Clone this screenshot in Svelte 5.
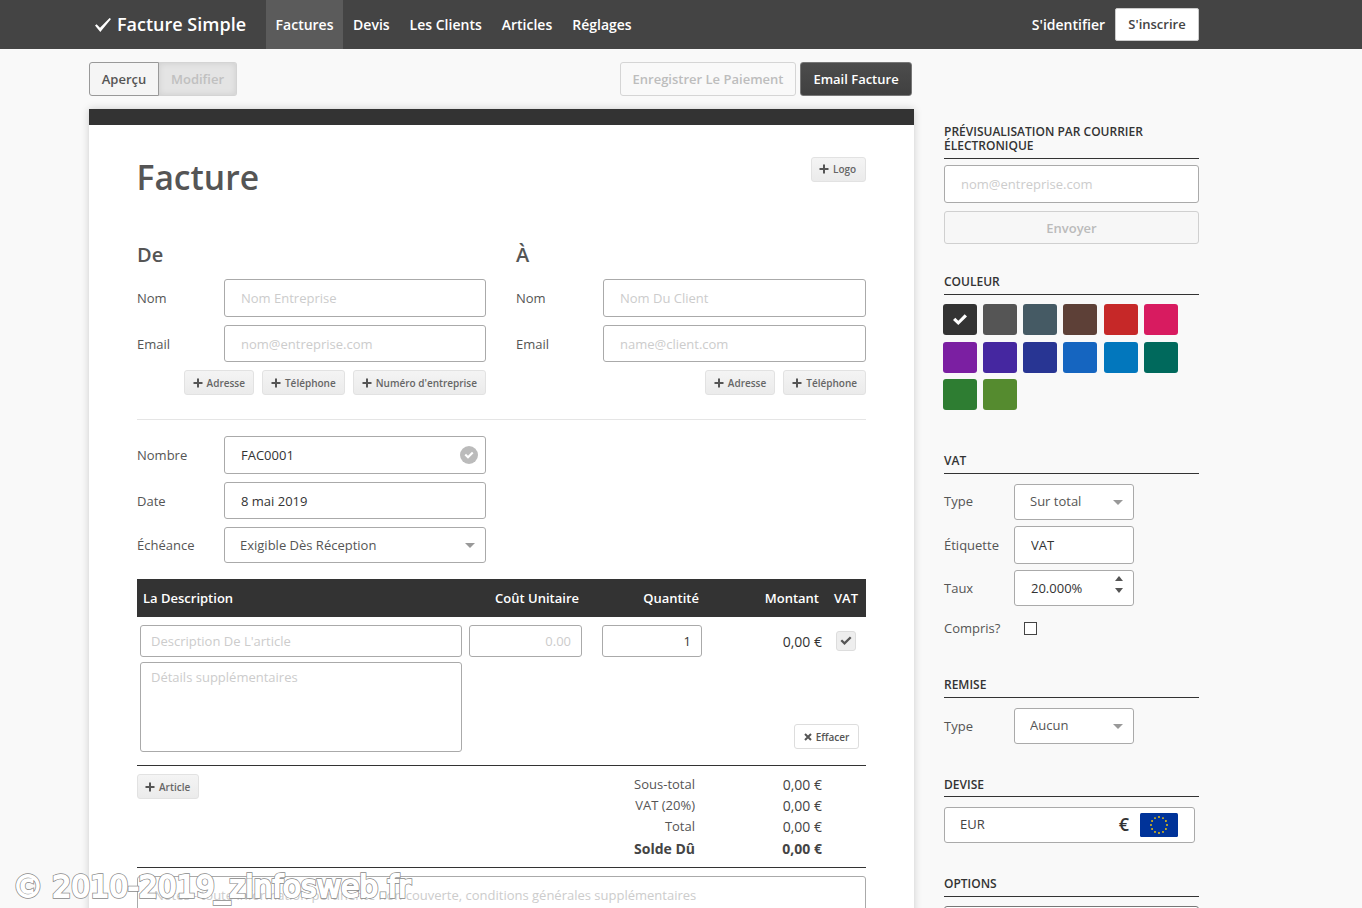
<script>
  const swatches = ['#333333','#555555','#455a64','#5d4037','#c62828','#d81b60','#7b1fa2','#4527a0','#283593','#1565c0','#0277bd','#00695c','#2e7d32','#558b2f'];
  const stars = Array.from({length:12},(_,i)=>{const a=i*Math.PI/6;return {x:19+Math.cos(a)*8,y:12+Math.sin(a)*8};});
  const totals = [['Sous-total','0,00 €'],['VAT (20%)','0,00 €'],['Total','0,00 €']];
  const markText = '© 2010-2019_zinfosweb.fr';
</script>

{#snippet plus()}
  <svg class="plus" viewBox="0 0 10 10" width="10" height="10"><path d="M4 0.5h2v3.500h3.500v2H6v3.500H4V6H0.500V4H4z" fill="#555"/></svg>
{/snippet}
{#snippet caret()}
  <span class="caret"></span>
{/snippet}

<div class="page">
  <header class="nav">
    <div class="wrap navrow">
      <a class="brand">
        <svg width="18" height="16" viewBox="0 0 18 16"><path d="M1 8.500l1.600-1.300 3.400 3.600L15.600 1l1.400 1L6.300 15z" fill="#fff"/></svg>
        <span class="brandtext">Facture Simple</span>
      </a>
      <nav class="links">
        <a class="active">Factures</a><a>Devis</a><a>Les Clients</a><a>Articles</a><a>Réglages</a>
      </nav>
      <a class="login">S'identifier</a>
      <button class="signup">S'inscrire</button>
    </div>
  </header>

  <div class="wrap toolbar">
    <div class="seg">
      <button class="seg-a">Aperçu</button><button class="seg-b">Modifier</button>
    </div>
    <div class="actions">
      <button class="pay">Enregistrer Le Paiement</button>
      <button class="email">Email Facture</button>
    </div>
  </div>

  <div class="wrap main">
    <section class="card">
      <div class="band"></div>
      <div class="body">
        <div class="titlerow">
          <h1>Facture</h1>
          <button class="mini logo"><span class="up1">{@render plus()}</span><span class="up1">Logo</span></button>
        </div>

        <div class="parties">
          <div class="party">
            <h2>De</h2>
            <div class="row r1"><label>Nom</label><input placeholder="Nom Entreprise" /></div>
            <div class="row r2"><label>Email</label><input placeholder="nom@entreprise.com" /></div>
            <div class="minis">
              <button class="mini">{@render plus()}Adresse</button>
              <button class="mini">{@render plus()}Téléphone</button>
              <button class="mini">{@render plus()}Numéro d'entreprise</button>
            </div>
          </div>
          <div class="party party-to">
            <h2>À</h2>
            <div class="row r1"><label>Nom</label><input placeholder="Nom Du Client" /></div>
            <div class="row r2"><label>Email</label><input placeholder="name@client.com" /></div>
            <div class="minis">
              <button class="mini">{@render plus()}Adresse</button>
              <button class="mini">{@render plus()}Téléphone</button>
            </div>
          </div>
        </div>

        <hr class="sep" />

        <div class="meta">
          <div class="row m1"><label>Nombre</label>
            <div class="field"><input value="FAC0001" />
              <svg class="ok" width="18" height="18" viewBox="0 0 18 18"><circle cx="9" cy="9" r="9" fill="#bbb"/><path d="M4.500 9.300l1.500-1.500 2 2 4-4 1.500 1.500-5.500 5.500z" fill="#fff"/></svg>
            </div>
          </div>
          <div class="row m2"><label>Date</label><input value="8 mai 2019" /></div>
          <div class="row m3"><label>Échéance</label>
            <div class="field"><select><option>Exigible Dès Réception</option></select>{@render caret()}</div>
          </div>
        </div>

        <div class="thead">
          <span class="th-d">La Description</span>
          <span class="th-c">Coût Unitaire</span>
          <span class="th-q">Quantité</span>
          <span class="th-m">Montant</span>
          <span class="th-v">VAT</span>
        </div>

        <div class="item">
          <div class="item-desc">
            <input class="sm" placeholder="Description De L'article" />
            <textarea placeholder="Détails supplémentaires"></textarea>
          </div>
          <input class="sm cost" placeholder="0.00" />
          <input class="sm qty" value="1" />
          <div class="amount">0,00 €</div>
          <div class="tax"><svg width="12" height="10" viewBox="0 0 12 10"><path d="M0.500 5l1.600-1.600 2.400 2.400L9.900 0.500 11.500 2l-7 7z" fill="#555"/></svg></div>
          <button class="del"><svg width="8" height="8" viewBox="0 0 8 8"><path d="M1 1l6 6M7 1L1 7" stroke="#555" stroke-width="2"/></svg>Effacer</button>
        </div>

        <div class="summary">
          <button class="mini article">{@render plus()}Article</button>
          <div class="totals">
            {#each totals as t}
              <div class="trow"><span>{t[0]}</span><span>{t[1]}</span></div>
            {/each}
            <div class="trow due"><span>Solde Dû</span><span>0,00 €</span></div>
          </div>
        </div>

        <textarea class="notes" placeholder="Notes - toute information pertinente non couverte, conditions générales supplémentaires"></textarea>
      </div>
    </section>

    <aside class="side">
      <h4 class="h-prev">Prévisualisation par courrier électronique</h4>
      <input class="side-input" placeholder="nom@entreprise.com" />
      <button class="send">Envoyer</button>

      <h4 class="h-color">Couleur</h4>
      <div class="swatches">
        {#each swatches as c, i}
          <div class="swatch" style="background:{c}">
            {#if i === 0}
              <svg width="16" height="13" viewBox="0 0 16 13"><path d="M1 7l2.300-2.300 3 3L12.700 1.300 15 3.600 6.300 12z" fill="#fff"/></svg>
            {/if}
          </div>
        {/each}
      </div>

      <h4 class="h-vat">VAT</h4>
      <div class="srow s1"><label>Type</label><div class="field w120"><select><option>Sur total</option></select>{@render caret()}</div></div>
      <div class="srow s2"><label>Étiquette</label><input class="w120" value="VAT" /></div>
      <div class="srow s3"><label>Taux</label>
        <div class="field w120"><input value="20.000%" />
          <span class="spin"><i class="up"></i><i class="down"></i></span>
        </div>
      </div>
      <div class="srow s4"><label>Compris?</label><span class="check"></span></div>

      <h4 class="h-rem">Remise</h4>
      <div class="srow s5"><label>Type</label><div class="field w120"><select><option>Aucun</option></select>{@render caret()}</div></div>

      <h4 class="h-dev">Devise</h4>
      <div class="currency">
        <span class="code">EUR</span>
        <span class="euro">€</span>
        <svg class="flag" width="38" height="24" viewBox="0 0 38 24">
          <rect width="38" height="24" rx="1.500" fill="#003399"/>
          {#each stars as s}<circle cx={s.x} cy={s.y} r="0.900" fill="#ffcc00"/>{/each}
        </svg>
      </div>

      <h4 class="h-opt">Options</h4>
      <div class="opt"></div>
    </aside>
  </div>

  <div class="mark" data-text={markText}>{markText}</div>
</div>

<style>
  :global(body) { margin: 0; background: #f9f9f9; overflow: hidden; }
  * { box-sizing: border-box; }
  .page {
    height: 908px; overflow: hidden; position: relative;
    font-family: "Open Sans", "Liberation Sans", sans-serif;
    font-size: 13px; color: #555;
  }
  .wrap { margin-left: 89px; width: 1110px; }
  .nav { height: 49px; background: #444; }
  .navrow { display: flex; align-items: center; height: 49px; color: #fff; }
  .brand { display: flex; align-items: center; gap: 5px; font-size: 18px; font-weight: 600; margin-left: 5px; width: 172px; flex: none; }
  .brandtext { margin-top: -2px; }
  .links { display: flex; height: 49px; flex: 1; font-size: 14px; font-weight: 600; }
  .links a { padding: 0 10px; line-height: 49px; }
  .links a.active { background: #5b5b5b; padding: 0 9.6px; }
  .login { font-size: 14px; font-weight: 600; margin-right: 10px; }
  .signup { height: 33px; width: 84px; margin-top: -1px; background: #fff; border: 1px solid #ccc; border-radius: 2px; font: 600 13px "Open Sans", sans-serif; color: #444; padding: 0; }

  .toolbar { display: flex; justify-content: space-between; padding-top: 13px; height: 60px; }
  .seg { display: flex; }
  .seg button { height: 34px; font: 600 13px "Open Sans", sans-serif; padding: 0; }
  .seg-a { width: 70px; background: #f5f5f5; color: #555; border: 1px solid #999; border-radius: 3px 0 0 3px; }
  .seg-b { width: 78px; background: #e4e4e4; color: #c0c0c0; border: 1px solid #d4d4d4; border-left: 0; border-radius: 0 3px 3px 0; box-shadow: inset 0 0 6px rgba(0,0,0,.1); }
  .actions { display: flex; gap: 4px; margin-right: 287px; margin-left: auto; }
  .actions button { height: 34px; font: 600 13px "Open Sans", sans-serif; padding: 0; border-radius: 3px; }
  .pay { width: 176px; background: #f9f9f9; color: #bdbdbd; border: 1px solid #d5d5d5; }
  .email { width: 112px; background: linear-gradient(#4c4c4c, #404040); color: #fff; border: 1px solid #777; }

  .main { display: flex; align-items: flex-start; gap: 30px; }
  .card { width: 825px; flex: none; background: #fff; box-shadow: 0 0 8px rgba(0,0,0,.18); }
  .band { height: 16px; background: #333; }
  .body { padding: 32px 48px 0; }
  .titlerow { display: flex; justify-content: space-between; align-items: flex-start; height: 84px; }
  h1 { margin: -1px 0 0 -0.5px; font-size: 33.6px; font-weight: 600; line-height: 42px; color: #555; }

  .mini { height: 25px; display: inline-flex; align-items: center; gap: 4px; padding: 0 8px; background: linear-gradient(#f4f4f4, #ebebeb); border: 1px solid #e2e2e2; border-radius: 3px; font: 600 10px "Open Sans", sans-serif; color: #666; }
  .plus { flex: none; display: block; }
  .logo { width: 55px; padding: 0 0 0 7px; gap: 4px; }
  .up1 { margin-top: -1px; display: block; }

  .parties { display: flex; gap: 30px; }
  .party { width: 349px; }
  .party-to { width: 350px; }
  h2 { margin: 0; font-size: 20px; font-weight: 600; line-height: 27px; height: 38px; color: #555; }

  .row { display: flex; align-items: center; }
  .row label { width: 87px; flex: none; font-size: 13px; color: #555; }
  .row input, .row .field { flex: 1; min-width: 0; }
  input, textarea, select {
    font: 13px "Open Sans", sans-serif; color: #333; background: #fff;
    border: 1px solid #aaa; border-radius: 3px; outline: none; width: 100%;
  }
  input { padding: 0 16px; }
  select { appearance: none; -webkit-appearance: none; padding: 0 15px; height: 100%; color: #555; }
  input::placeholder, textarea::placeholder { color: #ccc; opacity: 1; }
  .r1 { height: 38px; margin-bottom: 8px; }
  .r2 { height: 37px; margin-bottom: 8px; }
  .row input { height: 100%; }
  .minis { display: flex; justify-content: flex-end; gap: 8px; height: 25px; }

  .sep { border: 0; border-top: 1px solid #e5e5e5; margin: 24px 0 16px; }

  .field { position: relative; height: 100%; }
  .field input { height: 100%; }
  .ok { position: absolute; right: 8px; top: 10px; }
  .caret { position: absolute; right: 11px; top: 50%; margin-top: -2px; width: 0; height: 0; border: 5px solid transparent; border-top: 5px solid #999; border-bottom: 0; pointer-events: none; }

  .meta { width: 349px; }
  .m1 { height: 38px; margin-bottom: 8px; }
  .m2 { height: 37px; margin-bottom: 8px; }
  .m3 { height: 36px; margin-bottom: 16px; }

  .thead { height: 38px; background: #333; color: #fff; font-weight: 600; font-size: 13px; position: relative; display: grid; grid-template-columns: 342px 100px 120px 120px 47px; align-items: center; }
  .th-d { padding-left: 6px; }
  .th-c, .th-q, .th-m, .th-v { text-align: right; }
  .th-v { padding-right: 8px; }

  .item { position: relative; height: 149px; border-bottom: 1px solid #333; padding: 8px 3px 0; display: flex; align-items: flex-start; }
  .item-desc { width: 322px; display: flex; flex-direction: column; gap: 5px; flex: none; }
  .sm { height: 32px; padding: 0 10px; }
  .item textarea { height: 90px; padding: 5px 10px; resize: none; display: block; }
  .cost { width: 113px; flex: none; margin-left: 7px; text-align: right; }
  .qty { width: 100px; flex: none; margin-left: 20px; text-align: right; padding: 0 10px; }
  .amount { width: 120px; flex: none; text-align: right; color: #333; line-height: 34px; font-size: 14px; }
  .tax { width: 20px; height: 20px; margin: 6px 0 0 14px; flex: none; background: #eee; border: 1px solid #ddd; border-radius: 3px; display: flex; align-items: center; justify-content: center; }
  .del { position: absolute; right: 7px; top: 107px; width: 65px; height: 25px; display: flex; align-items: center; justify-content: center; gap: 4px; padding: 0; background: #fff; border: 1px solid #ddd; border-radius: 3px; font: 600 10px "Open Sans", sans-serif; color: #555; }

  .summary { height: 102px; border-bottom: 1px solid #333; padding-top: 8px; display: flex; justify-content: space-between; align-items: flex-start; }
  .article { width: 62px; padding: 0 0 0 7px; }
  .totals { width: 188px; margin-right: 44px; }
  .trow { display: flex; justify-content: space-between; height: 21px; line-height: 21px; margin-left: -14px; }
  .trow span:first-child { width: 75px; white-space: nowrap; display: flex; justify-content: flex-end; }
  .trow span:last-child { color: #444; font-size: 14px; }
  .due { font-weight: 700; font-size: 14px; height: 23px; line-height: 23px; }
  .due span:first-child { color: #444; }
  .notes { display: block; margin-top: 8px; height: 80px; padding: 9px 16px; resize: none; }

  .side { width: 255px; flex: none; }
  h4 { margin: 0; font-size: 12px; font-weight: 600; line-height: 14px; color: #333; text-transform: uppercase; border-bottom: 1px solid #333; }
  .h-prev { margin-top: 16px; padding-bottom: 6px; height: 34px; }
  .side-input { display: block; height: 38px; margin-top: 6px; }
  .send { display: block; width: 100%; height: 33px; margin-top: 8px; padding: 0; background: #f7f7f7; border: 1px solid #d0d0d0; border-radius: 3px; font: 600 13px "Open Sans", sans-serif; color: #bbb; }
  .h-color { margin-top: 31px; height: 20px; padding-bottom: 5px; }
  .swatches { display: grid; grid-template-columns: repeat(6, 34px); column-gap: 6.13px; row-gap: 6.5px; margin: 9px 0 0 -1px; grid-auto-rows: 31px; }
  .swatch { border-radius: 3px; display: flex; align-items: center; justify-content: center; }
  .h-vat { margin-top: 44px; height: 20px; padding-bottom: 5px; }
  .srow { display: flex; align-items: center; font-size: 13px; }
  .srow label { width: 70px; flex: none; }
  .srow select { padding-bottom: 2px; }
  .s1 label, .s4 label { margin-top: -2px; }
  .w120 { width: 120px; flex: none; height: 100%; }
  .s1 { height: 36px; margin-top: 10px; }
  .s2 { height: 38px; margin-top: 6px; }
  .s2 input { height: 100%; padding: 0 16px; }
  .s3 { height: 36px; margin-top: 6px; }
  .s4 { height: 13px; margin-top: 16px; }
  .check { width: 13px; height: 13px; border: 1px solid #444; background: #fff; margin-left: 10px; }
  .spin { position: absolute; right: 11px; top: 6px; display: flex; flex-direction: column; gap: 7px; }
  .spin i { display: block; width: 0; height: 0; border: 4px solid transparent; }
  .spin .up { border-top: 0; border-bottom: 5px solid #555; }
  .spin .down { border-bottom: 0; border-top: 5px solid #555; }
  .h-rem { margin-top: 43px; height: 20px; padding-bottom: 5px; }
  .s5 { height: 36px; margin-top: 10px; }
  .h-dev { margin-top: 34px; height: 19px; padding-bottom: 5px; }
  .currency { width: 251px; height: 36px; margin-top: 10px; background: #fff; border: 1px solid #aaa; border-radius: 3px; display: flex; align-items: center; padding: 0 16px 2px 15px; }
  .flag { margin-top: 2px; }
  .code { flex: 1; color: #444; }
  .euro { font-size: 18px; font-weight: 600; color: #333; margin-right: 11px; }
  .h-opt { margin-top: 34px; height: 20px; padding-bottom: 5px; }
  .opt { height: 60px; margin-top: 9px; background: #fff; border: 1px solid #777; border-radius: 3px; }

  .mark {
    position: absolute; left: 13px; top: 867px;
    font: 29.8px "DejaVu Sans", sans-serif; line-height: 40px; white-space: nowrap;
    color: #fff; -webkit-text-stroke: 3.4px #888;
  }
  .mark::after {
    content: attr(data-text);
    position: absolute; left: 0; top: 0;
    color: #fff; -webkit-text-stroke: 2px #fff;
  }
</style>
